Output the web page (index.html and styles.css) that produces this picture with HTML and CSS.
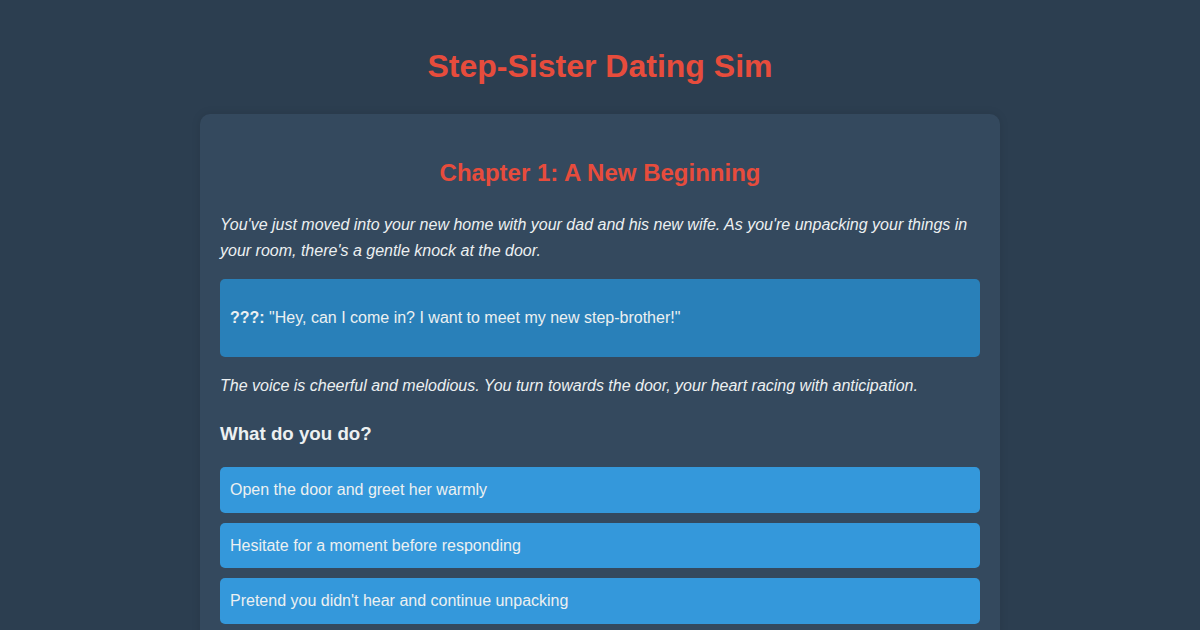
FILE: index.html
```html
<!DOCTYPE html>
<html lang="en">
<head>
<meta charset="utf-8">
<title>Step-Sister Dating Sim</title>
<link rel="stylesheet" href="styles.css">
</head>
<body>
  <h1 class="game-title">Step-Sister Dating Sim</h1>
  <main class="story-card">
    <h2 class="chapter-title">Chapter 1: A New Beginning</h2>
    <p class="narration">You've just moved into your new home with your dad and his new wife. As you're unpacking your things in your room, there's a gentle knock at the door.</p>
    <div class="dialogue">
      <p><strong>???:</strong> "Hey, can I come in? I want to meet my new step-brother!"</p>
    </div>
    <p class="narration">The voice is cheerful and melodious. You turn towards the door, your heart racing with anticipation.</p>
    <h3 class="prompt">What do you do?</h3>
    <div class="choices">
      <button class="choice">Open the door and greet her warmly</button>
      <button class="choice">Hesitate for a moment before responding</button>
      <button class="choice">Pretend you didn't hear and continue unpacking</button>
    </div>
  </main>
</body>
</html>
```

FILE: styles.css
```css
html, body {
  margin: 0;
}

body {
  padding: 20px;
  background: #2c3e50;
  color: #ecf0f1;
  font-family: "Liberation Sans", Arial, sans-serif;
  font-size: 16px;
  line-height: 1.6;
}

.game-title {
  margin: 21.44px 0;
  font-size: 32px;
  text-align: center;
  color: #e74c3c;
}

.story-card {
  display: block;
  max-width: 760px;
  margin: 0 auto;
  padding: 20px;
  background: #34495e;
  border-radius: 10px;
  box-shadow: 0 0 10px rgba(0, 0, 0, 0.1);
}

.chapter-title {
  margin: 19.92px 0;
  font-size: 24px;
  text-align: center;
  color: #e74c3c;
}

.narration {
  margin: 16px 0;
  font-style: italic;
}

.dialogue {
  padding: 0 10px;
  background: #2980b9;
  border-radius: 5px;
  overflow: hidden;
}

.dialogue p {
  margin: 26px 0;
}

.prompt {
  margin: 20px 0 18.5px;
  font-size: 18.72px;
}

.choices {
  display: flex;
  flex-direction: column;
  gap: 10px;
}

.choice {
  display: block;
  width: 100%;
  padding: 10px;
  border: none;
  border-radius: 5px;
  background: #3498db;
  color: #ecf0f1;
  font-family: inherit;
  font-size: 16px;
  line-height: 1.6;
  text-align: left;
  cursor: pointer;
}
```
